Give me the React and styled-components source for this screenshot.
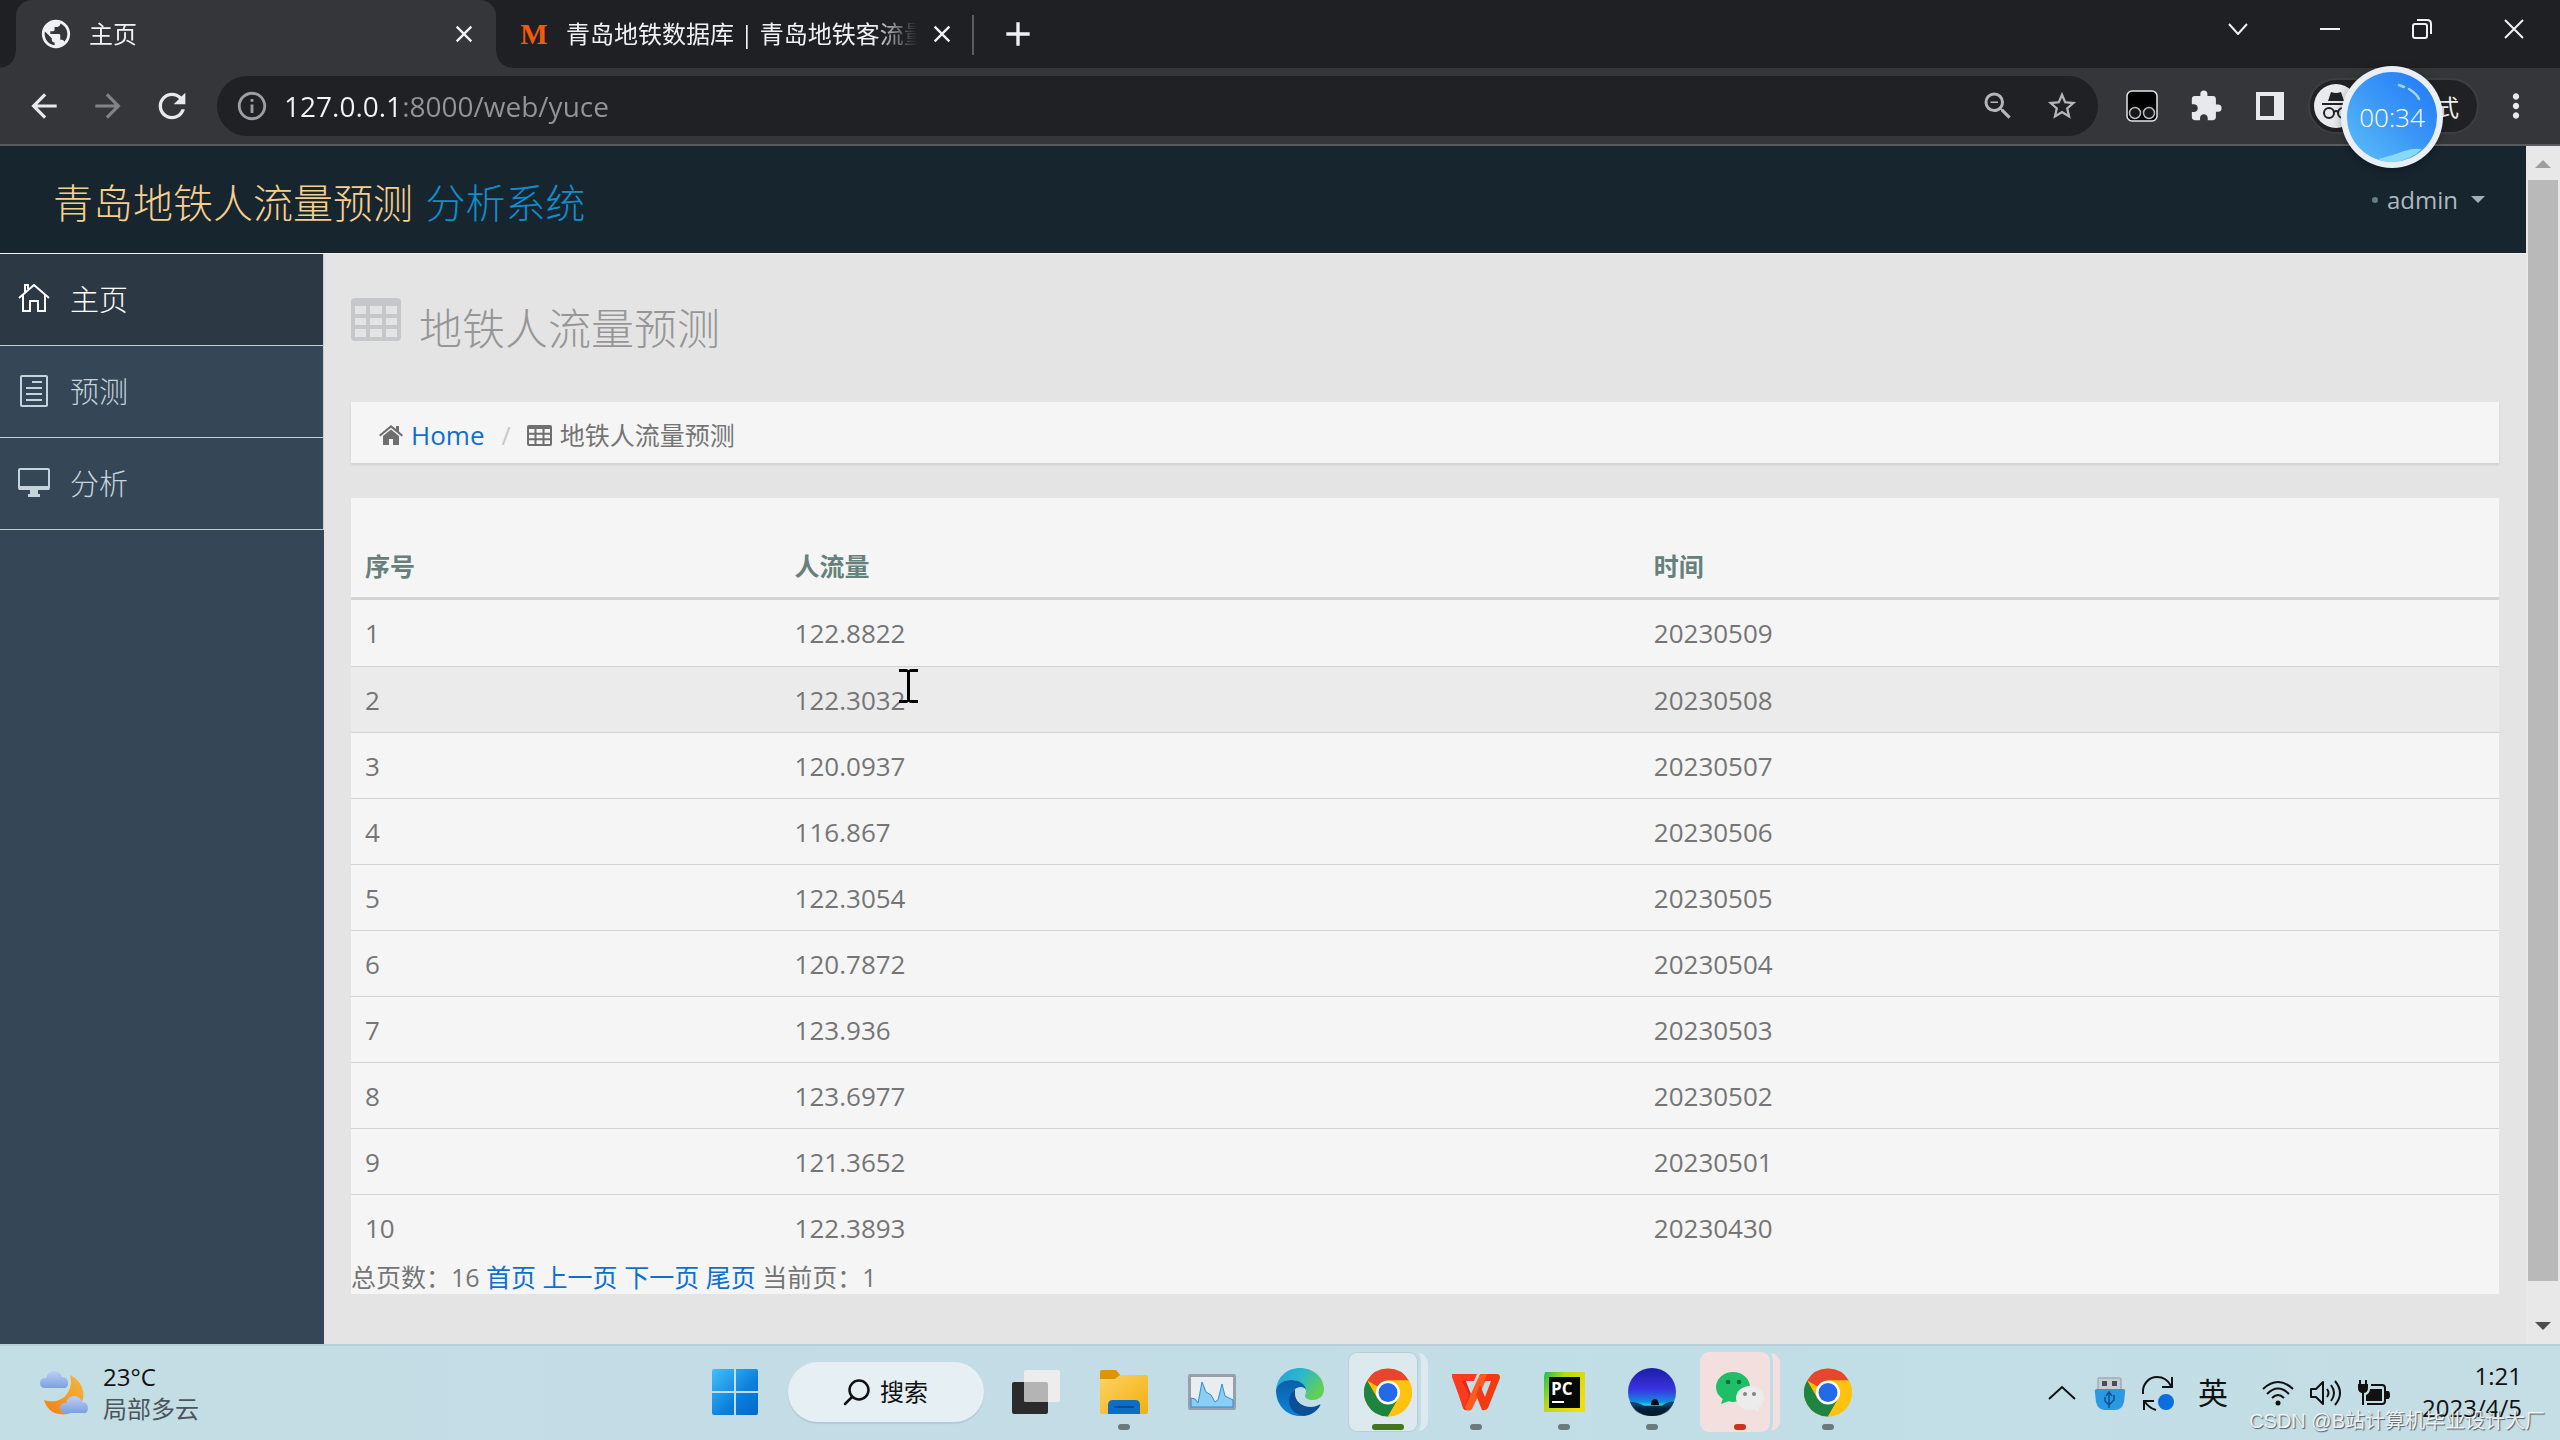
import React from "react";
import styled, { createGlobalStyle, css } from "styled-components";
import {
  MdPublic,
  MdClose,
  MdAdd,
  MdArrowBack,
  MdArrowForward,
  MdRefresh,
  MdInfoOutline,
  MdZoomOut,
  MdStarBorder,
  MdExtension,
  MdMoreVert,
} from "react-icons/md";

const latin = `"Open Sans", "Noto Sans CJK SC", sans-serif`;

const GlobalStyle = createGlobalStyle`
  *, *::before, *::after { box-sizing: border-box; }
  body { margin: 0; font-family: ${latin}; background: #e4e4e4; }
  button, input { font: inherit; color: inherit; border: 0; background: none; padding: 0; margin: 0; }
  a { text-decoration: none; }
  svg { display: block; flex: none; }
`;

const Screen = styled.div`
  position: relative;
  display: flex;
  flex-direction: column;
  height: 100vh;
  overflow: hidden;
`;

/* ---------- browser chrome ---------- */

const TabStrip = styled.div`
  display: flex;
  height: 68px;
  padding-left: 16px;
  background: #1f2023;
  color: #f1f1f3;
`;

const Tab = styled.div`
  position: relative;
  display: flex;
  align-items: center;
  gap: ${(p) => (p.$active ? 16 : 18)}px;
  width: ${(p) => (p.$active ? 480 : 478)}px;
  padding: 0 ${(p) => (p.$active ? "18px 0 23px" : "18px 0 24px")};
  ${(p) =>
    p.$active
      ? css`
          background: #35363a;
          border-radius: 16px 16px 0 0;
          &::before,
          &::after {
            content: "";
            position: absolute;
            bottom: 0;
            width: 16px;
            height: 16px;
          }
          &::before {
            left: -16px;
            background: radial-gradient(circle at 0 0, transparent 15px, #35363a 16px);
          }
          &::after {
            right: -16px;
            background: radial-gradient(circle at 100% 0, transparent 15px, #35363a 16px);
          }
        `
      : css`
          &::after {
            content: "";
            position: absolute;
            right: 0;
            top: 15px;
            width: 2px;
            height: 40px;
            background: #5a5b5f;
          }
        `}
`;

const TabTitle = styled.span`
  flex: 1;
  min-width: 0;
  overflow: hidden;
  white-space: nowrap;
  font-size: 24px;
  line-height: 34px;
  mask-image: linear-gradient(90deg, #000 calc(100% - 44px), transparent);
`;

const Favicon = styled.span`
  width: 28px;
  text-align: center;
  font: 700 29px/34px "Liberation Serif", serif;
  color: #f4590c;
`;

const TabButton = styled.button`
  display: grid;
  place-items: center;
  flex: none;
  margin-left: ${(p) => (p.$add ? 24 : 0)}px;
  margin-right: ${(p) => (p.$add ? "auto" : 0)};
  ${(p) => (p.$tight ? "margin-left: -7px;" : "")}
`;

const WindowButton = styled.button`
  display: grid;
  place-items: center;
  width: 92px;
  height: 58px;
`;

const Toolbar = styled.div`
  display: flex;
  align-items: center;
  height: 78px;
  padding: 0 12px;
  background: #35363a;
  border-bottom: 2px solid #5b5c60;
  color: #e8e9ed;
`;

const ToolButton = styled.button`
  display: grid;
  place-items: center;
  width: 64px;
  height: 60px;
  color: ${(p) => p.$color || "#e8e9ed"};
`;

const AddressBar = styled.form`
  display: flex;
  align-items: center;
  flex: 1;
  height: 60px;
  margin: 0 12px 0 13px;
  padding: 0 4px 0 18px;
  border-radius: 30px;
  background: #202124;
  color: #9aa0a6;
`;

const AddressInput = styled.input`
  flex: 1;
  min-width: 0;
  height: 48px;
  margin-left: 15px;
  font-size: 28px;
  outline: 0;
  color: transparent;
  background: linear-gradient(90deg, #f4f5f6 119px, #929498 119px);
  background-clip: text;
  -webkit-background-clip: text;
`;

const IncognitoChip = styled.button`
  display: flex;
  align-items: center;
  justify-content: space-between;
  width: 171px;
  height: 56px;
  margin: 0 5px 0 6px;
  padding: 0 18px 0 4px;
  border: 2px solid #3d3e42;
  border-radius: 28px;
  background: #202124;
  color: #f1f1f3;
  font-size: 23px;
  white-space: nowrap;
`;

const Recorder = styled.div`
  position: absolute;
  z-index: 2;
  top: 66px;
  right: 117px;
  width: 102px;
  height: 102px;
  display: grid;
  place-items: center;
  border-radius: 50%;
  box-shadow: 0 2px 8px rgba(0, 0, 0, 0.3);
  color: #fff;
  font-size: 26px;
  font-weight: 300;
  line-height: 36px;
  svg { grid-area: 1 / 1; }
  time { grid-area: 1 / 1; z-index: 1; }
`;

/* ---------- web page ---------- */

const Viewport = styled.div`
  display: flex;
  flex: 1;
  min-height: 0;
`;

const Page = styled.div`
  display: flex;
  flex-direction: column;
  flex: 1;
  min-width: 0;
  background: #e4e4e4;
  color: #757575;
`;

const Header = styled.header`
  display: flex;
  align-items: center;
  justify-content: space-between;
  height: 108px;
  padding: 0 41px 0 53px;
  border-bottom: 1px solid #eef2f5;
  background: #17252f;
`;

const Brand = styled.h1`
  margin: 6px 0 0;
  font-size: 40px;
  line-height: 56px;
  font-weight: 300;
  color: #f6cf8e;
  span { margin-left: 2px; color: #148bcb; }
`;

const UserMenu = styled.button`
  display: flex;
  align-items: center;
  gap: 9px;
  color: #aeb8bf;
  font-size: 24px;
  line-height: 34px;
  &::before {
    content: "";
    width: 6px;
    height: 6px;
    border-radius: 50%;
    background: #64807c;
  }
  &::after {
    content: "";
    margin-left: 4px;
    border: 7px solid transparent;
    border-top-color: #a3afb7;
    border-bottom: 0;
  }
`;

const Body = styled.div`
  display: flex;
  flex: 1;
  min-height: 0;
`;

const Sidebar = styled.nav`
  width: 324px;
  background: #354656;
`;

const SideLink = styled.a`
  display: flex;
  align-items: center;
  gap: 20px;
  height: 92px;
  padding-left: 18px;
  border-right: 1px solid #c3ced6;
  border-bottom: 1px solid #c3ced6;
  background: ${(p) => (p.$active ? "#2c3843" : "transparent")};
  color: ${(p) => (p.$active ? "#ffffff" : "#c5d3dd")};
  font-size: 29px;
  line-height: 40px;
  font-weight: 300;
  svg { margin-bottom: 2px; }
`;

const Main = styled.main`
  flex: 1;
  min-width: 0;
  padding: 0 27px;
`;

const PageTitle = styled.h2`
  display: flex;
  align-items: center;
  gap: 18px;
  height: 148px;
  margin: 0;
  padding-top: 2px;
  font-size: 43px;
  line-height: 60px;
  font-weight: 300;
  color: #969696;
  svg { margin-bottom: 20px; }
`;

const Breadcrumb = styled.ol`
  display: flex;
  align-items: center;
  height: 61px;
  margin: 0 0 35px;
  padding: 5px 28px 0;
  list-style: none;
  background: #f5f5f5;
  box-shadow: 0 2px 2px #cfcfcf;
  font-size: 25px;
  line-height: 36px;
  li { display: flex; align-items: center; gap: 8px; }
  li a { font-size: 26px; }
  li + li::before {
    content: "/";
    margin: 0 8px 0 17px;
    color: #c8c8c8;
  }
`;

const TextLink = styled.a`
  color: #0f6fd0;
`;

const Panel = styled.section`
  padding-top: 35px;
  background: #f5f5f5;
`;

const Table = styled.table`
  width: 100%;
  table-layout: fixed;
  border-collapse: separate;
  border-spacing: 0;
  text-align: left;
  tbody tr + tr td { border-top: 1px solid #d3d5d5; }
`;

const HeadCell = styled.th`
  width: ${(p) => p.$width};
  height: 67px;
  padding: 2px 14px 0;
  border-bottom: 3px solid #d4d4d4;
  font-size: 25px;
  line-height: 36px;
  font-weight: 700;
  color: #66817b;
`;

const Row = styled.tr`
  background: ${(p) => (p.$hovered ? "#ebebeb" : "transparent")};
`;

const Cell = styled.td`
  position: relative;
  height: 66px;
  padding: 0 14px;
  font-size: 26px;
  line-height: 36px;
`;

const TextCursor = styled.svg`
  position: absolute;
  left: 118px;
  top: 2px;
`;

const Pager = styled.div`
  height: 34px;
  font-size: 25px;
  line-height: 34px;
`;

const Scrollbar = styled.div`
  display: flex;
  flex-direction: column;
  align-items: center;
  width: 34px;
  background: #e8e8e8;
`;

const ScrollButton = styled.button`
  display: grid;
  place-items: center;
  width: 34px;
  height: ${(p) => (p.$down ? 36 : 34)}px;
  padding-top: ${(p) => (p.$down ? 0 : 2)}px;
`;

const ScrollTrack = styled.div`
  flex: 1;
  width: 30px;
  padding-bottom: 27px;
  &::before {
    content: "";
    display: block;
    height: 100%;
    background: #b9b9b9;
  }
`;

/* ---------- desktop taskbar ---------- */

const Taskbar = styled.footer`
  position: relative;
  display: flex;
  height: 96px;
  border-top: 2px solid #b8ced8;
  background: linear-gradient(90deg, #c4dee5, #c4dce6 30%, #c1dee7 70%, #c5dde5);
  color: #111;
`;

const Weather = styled.button`
  display: flex;
  align-items: center;
  gap: 15px;
  flex: 1 0 0;
  padding-left: 40px;
  text-align: left;
  font-size: 24px;
  line-height: 32px;
  small { display: block; font-size: 24px; color: #4b555b; }
`;

const Dock = styled.div`
  display: flex;
  align-items: center;
`;

const DockItem = styled.button`
  position: relative;
  display: grid;
  place-items: center;
  width: 88px;
  height: 94px;
  padding-bottom: 2px;
  svg { z-index: 1; }
  &::after {
    content: "";
    position: absolute;
    z-index: 1;
    bottom: 10px;
    left: 50%;
    width: ${(p) => (p.$wide ? 32 : 12)}px;
    height: 6px;
    margin-left: ${(p) => (p.$wide ? -16 : -6)}px;
    border-radius: 3px;
    background: ${(p) => p.$mark || "transparent"};
  }
`;

const StackTile = styled.span`
  position: absolute;
  top: 7px;
  left: 5px;
  width: 68px;
  height: 92px;
  max-height: calc(100% - 16px);
  border-radius: 8px;
  background: ${(p) => p.$fill};
  box-shadow: 0 0 0 1px ${(p) => p.$edge};
  &::after {
    content: "";
    position: absolute;
    left: 63px;
    top: 0;
    width: 16px;
    height: 100%;
    border: solid ${(p) => p.$fill};
    border-width: 0 7px 0 0;
    border-radius: 0 10px 10px 0;
  }
`;

const SearchButton = styled.button`
  display: flex;
  align-items: center;
  justify-content: center;
  gap: 10px;
  width: 196px;
  height: 60px;
  margin: 0 8px 2px 9px;
  border-radius: 30px;
  background: #e6eff3;
  box-shadow: 0 2px 1px #b3cbd6;
  font-size: 24px;
  line-height: 34px;
`;

const Tray = styled.div`
  display: flex;
  align-items: center;
  justify-content: flex-end;
  flex: 1 0 0;
  padding-right: 38px;
`;

const TrayButton = styled.button`
  display: grid;
  place-items: center;
  width: ${(p) => (p.$ime ? 62 : 48)}px;
  height: 60px;
  margin-right: ${(p) => (p.$ime ? 10 : 0)}px;
  font-size: 30px;
  line-height: 40px;
`;

const Clock = styled.time`
  width: 124px;
  text-align: right;
  font-size: 24px;
  line-height: 32px;
  padding-bottom: 2px;
`;

const Watermark = styled.div`
  position: absolute;
  right: 15px;
  bottom: 4px;
  font-family: "Liberation Sans", "Noto Sans CJK SC", sans-serif;
  font-size: 20px;
  line-height: 30px;
  color: rgba(255, 255, 255, 0.85);
  text-shadow: 1px 1px 1px rgba(60, 70, 80, 0.85);
  white-space: nowrap;
`;

/* ---------- drawings ---------- */

const GridIcon = ({ width, height, color }) => (
  <svg width={width} height={height} viewBox="0 0 50 43" preserveAspectRatio="none">
    <path
      fill={color}
      fillRule="evenodd"
      d="M4 0H46a4 4 0 0 1 4 4V39a4 4 0 0 1-4 4H4a4 4 0 0 1-4-4V4a4 4 0 0 1 4-4ZM4 8v8h11V8Zm15 0v8h12V8Zm16 0v8h11V8ZM4 20v7h11v-7Zm15 0v7h12v-7Zm16 0v7h11v-7ZM4 31v8h11v-8Zm15 0v8h12v-8Zm16 0v8h11v-8Z"
    />
  </svg>
);

const HouseOutline = () => (
  <svg width="32" height="29" viewBox="0 0 32 29" fill="none" stroke="currentColor" strokeWidth="2">
    <path d="M1 14 16 1l15 13M5 11v16h7V17h8v10h7V11M7 8V1h3v4" />
  </svg>
);

const SheetOutline = () => (
  <svg width="32" height="32" viewBox="0 0 32 32" fill="none" stroke="currentColor" strokeWidth="2">
    <rect x="3" y="1" width="26" height="30" rx="1" />
    <path d="M14 7h10M8 13h16M8 19h16M8 25h16" />
  </svg>
);

const ScreenOutline = () => (
  <svg width="32" height="29" viewBox="0 0 32 29">
    <rect x="1" y="1" width="30" height="20" rx="1" fill="none" stroke="currentColor" strokeWidth="2" />
    <path fill="currentColor" d="M1 18h30v4H20v4h2v3H10v-3h2v-4H1Z" />
  </svg>
);

const HouseSolid = () => (
  <svg width="24" height="20" viewBox="0 0 24 20" fill="#6f6f6f">
    <path d="M12 4.500 20 11v9h-6v-6h-4v6H4v-9Z" />
    <path d="M12 0 17 4V1h3v5.500L24 10l-1.300 1.400L12 2.800 1.300 11.400 0 10Z" />
  </svg>
);

const Chrome = () => (
  <svg width="48" height="57" viewBox="0 0 48 48">
    <circle cx="24" cy="24" r="24" fill="#ffc107" />
    <path fill="#e8452f" d="M24 24 3.200 12A24 24 0 0 1 44.800 12H24Z" />
    <path fill="#1f8442" d="M3.200 12A24 24 0 0 0 24 48L34.400 30 24 24 13.600 30Z" />
    <path fill="#ffc20e" d="M24 12h20.800A24 24 0 0 1 24 48l10.400-18Z" />
    <circle cx="24" cy="24" r="12" fill="#fff" />
    <circle cx="24" cy="24" r="9.500" fill="#2469e8" />
  </svg>
);

const Edge = () => (
  <svg width="48" height="48" viewBox="0 0 48 48">
    <defs>
      <linearGradient id="edgeTop" x1="0" y1="0" x2="1" y2="0.5">
        <stop offset="0" stopColor="#1f9fe0" />
        <stop offset="0.5" stopColor="#2ab8cc" />
        <stop offset="1" stopColor="#62cf55" />
      </linearGradient>
      <linearGradient id="edgeMid" x1="0" y1="0" x2="0" y2="1">
        <stop offset="0" stopColor="#0b5fa8" />
        <stop offset="1" stopColor="#0a84dd" />
      </linearGradient>
    </defs>
    <path fill="url(#edgeTop)" d="M0 22C1 9 11 0 24 0s24 9 24 21c0 7-5 11-11 11-5 0-8-2-8-4 0-1 1-2 1-5 0-5-6-11-15-11S1 17 0 22Z" />
    <path fill="url(#edgeMid)" d="M0 22c2-7 8-10 15-10 9 0 15 5 15 10-1-2-3-3-5-3-6 0-11 6-11 12 0 9 7 16 15 17C14 50 0 40 0 22Z" />
    <path fill="#0c4f96" d="M19 21c-4 3-6 7-6 12 0 8 7 14 15 15 8-1 13-5 16-10 1-1 0-2-1-1-3 1-5 2-8 2-9 0-16-6-16-13 0-2 0-3 0-5Z" />
  </svg>
);

const Wps = () => (
  <svg width="48" height="38" viewBox="0 0 48 38">
    <path fill="#e12a16" d="M0 1h11l8 20-4 16q-2 1-4-2Z" />
    <path fill="#fb3b20" d="M0 4Q0 1 3 1h22l-3 7H10l7 14-5 14Z" />
    <path fill="#ff5a1f" d="M28 1h9L20 36q-2 3-6 1l-1-3Z" />
    <path fill="#f33a12" d="M35 1h10q3 0 3 4L36 35q-2 3-6 2l-6-15 4-10 5 12 6-16h-7Z" />
  </svg>
);

const PyCharm = () => (
  <svg width="42" height="42" viewBox="0 0 42 42">
    <defs>
      <linearGradient id="pycharm" x1="0" y1="0" x2="1" y2="0.6">
        <stop offset="0" stopColor="#0fc14f" />
        <stop offset="0.4" stopColor="#b8d816" />
        <stop offset="1" stopColor="#f1dc0c" />
      </linearGradient>
    </defs>
    <path fill="url(#pycharm)" d="M2 1h40v40H1V6Z" />
    <rect x="6" y="6" width="31" height="31" fill="#040806" />
    <text x="8" y="24" fill="#fff" fontFamily="Open Sans, sans-serif" fontWeight="700" fontSize="17">PC</text>
    <rect x="9" y="30" width="12" height="2" fill="#fff" />
  </svg>
);

const NightScene = () => (
  <svg width="48" height="48" viewBox="0 0 48 48">
    <defs>
      <linearGradient id="night" x1="0" y1="0" x2="0" y2="1">
        <stop offset="0" stopColor="#1b1ca6" />
        <stop offset="0.45" stopColor="#3a34e0" />
        <stop offset="0.7" stopColor="#1489e0" />
        <stop offset="0.76" stopColor="#23c3ea" />
        <stop offset="0.84" stopColor="#06324e" />
        <stop offset="1" stopColor="#02060d" />
      </linearGradient>
    </defs>
    <circle cx="24" cy="24" r="24" fill="url(#night)" />
    <path fill="#061d38" d="M2 34q8 0 14 4h18q6-5 12-4-5 14-22 14T2 34Z" opacity="0.75" />
    <path fill="#020913" d="M23 37c0-4 2-6 4-6s4 3 4 6Z" />
  </svg>
);

const WeChat = () => (
  <svg width="48" height="40" viewBox="0 0 48 40">
    <ellipse cx="17" cy="15" rx="17" ry="15" fill="#1fbf68" />
    <path fill="#1fbf68" d="m7 26-2 6 8-3Z" />
    <ellipse cx="34" cy="26" rx="14" ry="12" fill="#ececec" />
    <path fill="#ececec" d="m36 36 7 4-1-6Z" />
    <g fill="#0b6b39"><circle cx="12" cy="10" r="2.300" /><circle cx="23" cy="10" r="2.300" /></g>
    <g fill="#848484"><circle cx="29" cy="22" r="2" /><circle cx="38" cy="22" r="2" /></g>
  </svg>
);

const WindowsLogo = () => (
  <svg width="46" height="46" viewBox="0 0 46 46">
    <defs>
      <linearGradient id="win" x1="0" y1="0" x2="1" y2="1" gradientUnits="objectBoundingBox">
        <stop offset="0" stopColor="#42c0fb" />
        <stop offset="0.6" stopColor="#0b7fdc" />
        <stop offset="1" stopColor="#0467cc" />
      </linearGradient>
    </defs>
    <path fill="url(#win)" d="M2 0H22V22H0V2Q0 0 2 0ZM24 0H44q2 0 2 2V22H24ZM0 24H22V46H2q-2 0-2-2ZM24 24H46V44q0 2-2 2H24Z" />
  </svg>
);

const TaskView = () => (
  <svg width="48" height="44" viewBox="0 0 48 44">
    <rect x="0" y="12" width="36" height="32" rx="2" fill="#2b2b2b" />
    <rect x="12" y="0" width="36" height="32" rx="2" fill="#ededed" />
    <path fill="#b4b4b4" d="M12 12h22q2 0 2 2v18H14q-2 0-2-2Z" />
  </svg>
);

const Folder = () => (
  <svg width="48" height="44" viewBox="0 0 48 44">
    <defs>
      <linearGradient id="folder" x1="0" y1="0" x2="1" y2="1">
        <stop offset="0" stopColor="#fbd367" />
        <stop offset="1" stopColor="#f4ae0c" />
      </linearGradient>
    </defs>
    <path fill="#dc9605" d="M0 2q0-2 2-2h14l5 6-5 6H0Z" />
    <path fill="url(#folder)" d="M0 9h15l5-4h26q2 0 2 2v35q0 2-2 2H2q-2 0-2-2Z" />
    <path fill="#0a6fc4" d="M8 44V35q0-5 5-5h22q5 0 5 5v9Z" />
    <rect x="14" y="36" width="20" height="2" rx="1" fill="#054c92" />
  </svg>
);

const Monitor = () => (
  <svg width="48" height="36" viewBox="0 0 48 36">
    <rect width="48" height="36" rx="2" fill="#97a1ae" />
    <rect x="3" y="3" width="42" height="30" fill="#e9edf0" />
    <path fill="#8ccdf5" stroke="#2c8fd4" d="M3 24l4 1 3 4 4-21 4 10 5 3 4 7 3-2 4-16 3 12 4 2 4 2v7H3Z" />
  </svg>
);

const WeatherIcon = () => (
  <svg width="48" height="44" viewBox="0 0 48 44">
    <defs>
      <linearGradient id="moon" x1="0" y1="1" x2="1" y2="0">
        <stop offset="0" stopColor="#f27f17" />
        <stop offset="1" stopColor="#f3ba3b" />
      </linearGradient>
      <linearGradient id="cloud" x1="0" y1="0" x2="0" y2="1">
        <stop offset="0" stopColor="#bdd0f5" />
        <stop offset="1" stopColor="#7c9fdf" />
      </linearGradient>
    </defs>
    <path fill="url(#moon)" d="M30 4c10 5 15 14 13 24-3 12-14 17-24 15C11 42 6 36 4 29c8 3 18 1 23-6 4-6 5-12 3-19Z" />
    <path fill="url(#cloud)" d="M5 17q-5 0-5-5t6-5Q8 0 14 0t8 6q6 0 6 6t-5 5Z" />
    <path fill="url(#cloud)" d="M25 42q-5 0-5-5t6-5q2-7 8-7t8 6q6 0 6 6t-5 5Z" />
  </svg>
);

const Usb = () => (
  <svg width="32" height="33" viewBox="0 0 32 33">
    <rect x="4" y="1" width="23" height="12" rx="1" fill="#c9cdd3" stroke="#8e959e" />
    <path fill="#4a4e55" d="M8 4h5v5H8Zm10 0h5v5h-5Z" />
    <path fill="#2a98e2" d="M3 12h26q3 0 2 4l-1 9q-2 8-9 8H11q-7 0-9-8l-1-9q-1-4 2-4Z" />
    <path stroke="#0e5290" strokeWidth="1.500" fill="none" d="M15 31V16m0 12-4-4v-4m4 8 5-5v-5M12 19l3-4 3 4" />
  </svg>
);

const Sync = () => (
  <svg width="34" height="36" viewBox="0 0 34 36" fill="none" stroke="#111" strokeWidth="2">
    <path d="M2 19C1 9 8 2 16 2c6 0 11 3 14 9M31 2v10H21M3 35V26h10M4 27q4 6 11 8" />
    <circle cx="25" cy="27" r="8" fill="#0a6fdc" stroke="none" />
  </svg>
);

const Wifi = () => (
  <svg width="32" height="26" viewBox="0 0 32 26" fill="none" stroke="#111" strokeWidth="2">
    <path d="M1 9q15-14 30 0M5 14q11-11 22 0M10 18q6-6 12 0" />
    <circle cx="16" cy="23" r="2.500" fill="#111" stroke="none" />
  </svg>
);

const Speaker = () => (
  <svg width="32" height="28" viewBox="0 0 32 28" fill="none" stroke="#111" strokeWidth="2" strokeLinejoin="round">
    <path d="M1 10h5l7-7v22l-7-7H1ZM17 10q3 4 0 8M21 6q6 8 0 16M25 2q10 12 0 24" />
  </svg>
);

const Battery = () => (
  <svg width="32" height="26" viewBox="0 0 32 26">
    <path fill="none" stroke="#111" strokeWidth="2" d="M13 5h11q3 0 3 3v13q0 3-3 3H9M5 12v13" />
    <path fill="#111" d="M12 9h12v12H8v-6q4-2 4-6ZM28 11h2q2 0 2 4t-2 4h-2ZM0 4h1V0h2v4h4V0h2v4h1v4q0 5-5 5T0 8Z" />
  </svg>
);

const Magnifier = () => (
  <svg width="27" height="27" viewBox="0 0 27 27" fill="none" stroke="#111" strokeWidth="2.500" strokeLinecap="round">
    <circle cx="16" cy="11" r="9.500" />
    <path d="m9 18-7 7" />
  </svg>
);

const Line = ({ d, width = 20, height = 20 }) => (
  <svg width={width} height={height} viewBox={`0 0 ${width} ${height}`} fill="none" stroke="currentColor" strokeWidth="2">
    <path d={d} />
  </svg>
);

const OwlEyes = () => (
  <svg width="32" height="32" viewBox="0 0 32 32" fill="#000">
    <rect x="1" y="1" width="30" height="30" rx="5" stroke="#e4e5e8" strokeWidth="1.500" />
    <g fill="#16171a" stroke="#b9bbbf" strokeWidth="1.500">
      <circle cx="9" cy="23" r="5.500" />
      <circle cx="23" cy="23" r="5.500" />
    </g>
  </svg>
);

const SidePanel = () => (
  <svg width="28" height="28" viewBox="0 0 28 28">
    <path fill="#e8e9ed" fillRule="evenodd" d="M0 0h28v28H0ZM4 4v20h14V4Z" />
  </svg>
);

const Incognito = () => (
  <svg width="44" height="44" viewBox="0 0 44 44">
    <circle cx="22" cy="22" r="22" fill="#e9eaee" />
    <path fill="#222326" d="m14 17 3-9q5 2 10 0l3 9ZM8 19h28v2H8Z" />
    <g fill="none" stroke="#222326" strokeWidth="2">
      <circle cx="15" cy="29" r="5" />
      <circle cx="29" cy="29" r="5" />
      <path d="M20 28q2-2 4 0" />
    </g>
  </svg>
);

const RecorderBall = () => (
  <svg width="102" height="102" viewBox="0 0 102 102">
    <defs>
      <linearGradient id="ball" x1="0" y1="1" x2="1" y2="0">
        <stop offset="0" stopColor="#5fc0f6" />
        <stop offset="0.5" stopColor="#3b98f8" />
        <stop offset="1" stopColor="#1f77f6" />
      </linearGradient>
    </defs>
    <circle cx="51" cy="51" r="51" fill="#e9eff5" />
    <circle cx="51" cy="51" r="45" fill="url(#ball)" />
    <path fill="#86daf6" d="M37 93q16-4 26-8 9-3 18-2-12 12-30 13-9 0-14-3Z" />
    <path fill="none" stroke="#a5d2fd" strokeWidth="2.500" strokeLinecap="round" d="m58 19 5 2m5 2q8 5 10 10" />
  </svg>
);

/* ---------- data ---------- */

const menu = [
  { label: "主页", icon: <HouseOutline />, active: true },
  { label: "预测", icon: <SheetOutline /> },
  { label: "分析", icon: <ScreenOutline /> },
];

const flow = [
  ["1", "122.8822", "20230509"],
  ["2", "122.3032", "20230508"],
  ["3", "120.0937", "20230507"],
  ["4", "116.867", "20230506"],
  ["5", "122.3054", "20230505"],
  ["6", "120.7872", "20230504"],
  ["7", "123.936", "20230503"],
  ["8", "123.6977", "20230502"],
  ["9", "121.3652", "20230501"],
  ["10", "122.3893", "20230430"],
];

const hoveredRow = "2";
const grey = "#6c7a80";

const lightTile = { fill: "#dce9ee", edge: "#b9ced7" };
const pinkTile = { fill: "#f4dfdf", edge: "#f4dfdf" };

const apps = [
  { name: "任务视图", icon: <TaskView /> },
  { name: "文件资源管理器", icon: <Folder />, mark: grey },
  { name: "资源监视器", icon: <Monitor /> },
  { name: "Edge", icon: <Edge /> },
  { name: "Chrome", icon: <Chrome />, mark: "#43751c", wide: true, tile: lightTile },
  { name: "WPS", icon: <Wps />, mark: grey },
  { name: "PyCharm", icon: <PyCharm />, mark: grey },
  { name: "壁纸", icon: <NightScene />, mark: grey },
  { name: "微信", icon: <WeChat />, mark: "#c8351c", tile: pinkTile },
  { name: "Chrome 2", icon: <Chrome />, mark: grey },
];

export default function App() {
  return (
    <Screen>
      <GlobalStyle />
      <TabStrip>
        <Tab $active>
          <MdPublic size={34} />
          <TabTitle>主页</TabTitle>
          <TabButton aria-label="关闭"><MdClose size={28} /></TabButton>
        </Tab>
        <Tab>
          <Favicon>M</Favicon>
          <TabTitle>青岛地铁数据库 | 青岛地铁客流量</TabTitle>
          <TabButton $tight aria-label="关闭"><MdClose size={28} /></TabButton>
        </Tab>
        <TabButton $add aria-label="新标签页"><MdAdd size={40} /></TabButton>
        <WindowButton aria-label="搜索标签页"><Line d="m1 1 9 10 9-10" height={12} /></WindowButton>
        <WindowButton aria-label="最小化"><Line d="M0 1h20" height={2} /></WindowButton>
        <WindowButton aria-label="还原"><Line d="M3 5h10q2 0 2 2v10q0 2-2 2H3q-2 0-2-2V7q0-2 2-2ZM5 1h10q4 0 4 4v10" /></WindowButton>
        <WindowButton aria-label="关闭窗口"><Line d="m1 1 18 18M19 1 1 19" /></WindowButton>
      </TabStrip>

      <Toolbar>
        <ToolButton aria-label="后退"><MdArrowBack size={38} /></ToolButton>
        <ToolButton $color="#828387" aria-label="前进"><MdArrowForward size={38} /></ToolButton>
        <ToolButton aria-label="重新加载"><MdRefresh size={40} /></ToolButton>
        <AddressBar onSubmit={(e) => e.preventDefault()}>
          <MdInfoOutline size={34} />
          <AddressInput aria-label="地址" defaultValue="127.0.0.1:8000/web/yuce" />
          <ToolButton type="button" $color="#b4b6ba" aria-label="缩放"><MdZoomOut size={36} /></ToolButton>
          <ToolButton type="button" $color="#b4b6ba" aria-label="收藏"><MdStarBorder size={34} /></ToolButton>
        </AddressBar>
        <ToolButton aria-label="脚本"><OwlEyes /></ToolButton>
        <ToolButton aria-label="扩展程序"><MdExtension size={34} /></ToolButton>
        <ToolButton aria-label="侧边栏"><SidePanel /></ToolButton>
        <IncognitoChip aria-label="无痕模式"><Incognito /><span>式</span></IncognitoChip>
        <ToolButton aria-label="菜单"><MdMoreVert size={38} /></ToolButton>
      </Toolbar>

      <Recorder>
        <RecorderBall />
        <time>00:34</time>
      </Recorder>

      <Viewport>
        <Page>
          <Header>
            <Brand>青岛地铁人流量预测 <span>分析系统</span></Brand>
            <UserMenu>admin</UserMenu>
          </Header>
          <Body>
            <Sidebar>
              {menu.map((m) => (
                <SideLink key={m.label} href="#" $active={m.active}>{m.icon}{m.label}</SideLink>
              ))}
            </Sidebar>
            <Main>
              <PageTitle><GridIcon width={50} height={43} color="#c5c7cb" />地铁人流量预测</PageTitle>
              <Breadcrumb>
                <li><HouseSolid /><TextLink href="#">Home</TextLink></li>
                <li><GridIcon width={25} height={21} color="#6f6f6f" />地铁人流量预测</li>
              </Breadcrumb>
              <Panel>
                <Table>
                  <thead>
                    <tr>
                      <HeadCell $width="20%">序号</HeadCell>
                      <HeadCell $width="40%">人流量</HeadCell>
                      <HeadCell $width="40%">时间</HeadCell>
                    </tr>
                  </thead>
                  <tbody>
                    {flow.map(([id, count, date]) => (
                      <Row key={id} $hovered={id === hoveredRow}>
                        <Cell>{id}</Cell>
                        <Cell>
                          {count}
                          {id === hoveredRow && (
                            <TextCursor width="19" height="34" viewBox="0 0 19 34" fill="#000">
                              <path d="M0 0h8l1 1h1l1-1h8v3h-8v28h8v3h-8l-1-1H9l-1 1H0v-3h8V3H0Z" />
                            </TextCursor>
                          )}
                        </Cell>
                        <Cell>{date}</Cell>
                      </Row>
                    ))}
                  </tbody>
                </Table>
                <Pager>
                  总页数：16 <TextLink href="#">首页</TextLink> <TextLink href="#">上一页</TextLink>{" "}
                  <TextLink href="#">下一页</TextLink> <TextLink href="#">尾页</TextLink> 当前页：1
                </Pager>
              </Panel>
            </Main>
          </Body>
        </Page>
        <Scrollbar>
          <ScrollButton aria-label="向上滚动">
            <svg width="16" height="8" viewBox="0 0 16 8"><path fill="#9d9d9d" d="m8 0 8 8H0Z" /></svg>
          </ScrollButton>
          <ScrollTrack />
          <ScrollButton $down aria-label="向下滚动">
            <svg width="16" height="8" viewBox="0 0 16 8"><path fill="#4e4e4e" d="M0 0h16L8 8Z" /></svg>
          </ScrollButton>
        </Scrollbar>
      </Viewport>

      <Taskbar>
        <Weather>
          <WeatherIcon />
          <span>23°C<small>局部多云</small></span>
        </Weather>
        <Dock>
          <DockItem aria-label="开始"><WindowsLogo /></DockItem>
          <SearchButton><Magnifier />搜索</SearchButton>
          {apps.map((a) => (
            <DockItem key={a.name} aria-label={a.name} $mark={a.mark} $wide={a.wide}>
              {a.tile && <StackTile $fill={a.tile.fill} $edge={a.tile.edge} />}
              {a.icon}
            </DockItem>
          ))}
        </Dock>
        <Tray>
          <TrayButton aria-label="显示隐藏的图标"><Line d="m1 14 13-12 13 12" width={28} height={16} /></TrayButton>
          <TrayButton aria-label="USB"><Usb /></TrayButton>
          <TrayButton aria-label="更新"><Sync /></TrayButton>
          <TrayButton $ime>英</TrayButton>
          <TrayButton aria-label="网络"><Wifi /></TrayButton>
          <TrayButton aria-label="音量"><Speaker /></TrayButton>
          <TrayButton aria-label="电池"><Battery /></TrayButton>
          <Clock>1:21<br />2023/4/5</Clock>
        </Tray>
        <Watermark>CSDN @B站计算机毕业设计大厂</Watermark>
      </Taskbar>
    </Screen>
  );
}
